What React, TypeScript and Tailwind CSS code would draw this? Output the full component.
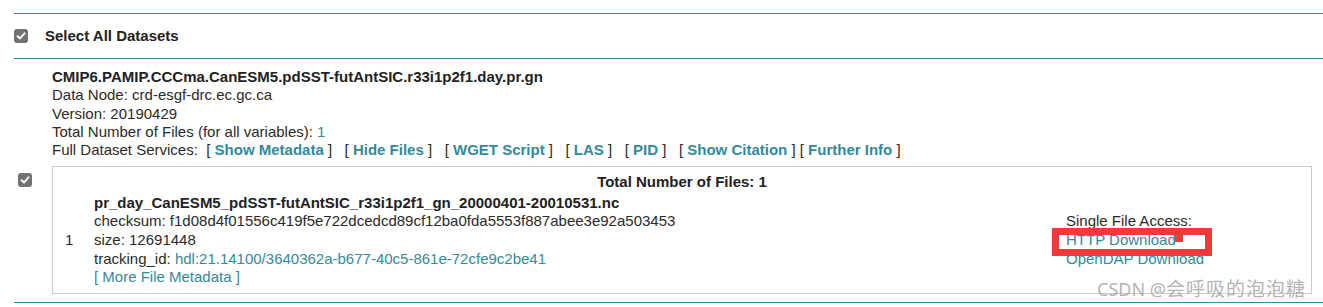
import React from "react";

function Check() {
  return (
    <div className="w-[14px] h-[14px] rounded-[3px] bg-[#727272] flex items-center justify-center shrink-0">
      <svg width="10" height="10" viewBox="0 0 10 10">
        <path d="M1.6 5.2 L4 7.5 L8.5 2.3" fill="none" stroke="#fff" strokeWidth="1.9" strokeLinecap="round" strokeLinejoin="round" />
      </svg>
    </div>
  );
}

const L = "text-[#338a9a]";

export default function App() {
  return (
    <div className="relative w-[1323px] h-[307px] overflow-hidden bg-white font-['Liberation_Sans',Arial,sans-serif] text-[15px] text-[#2a2a2a]">
      <div className="pl-[14px] pt-[13px]">
        <div className="border-t border-[#3a8b8c]">
          <div className="h-[44px] flex items-center gap-[17px]">
            <Check />
            <span className="font-bold text-[#222] pt-[1px]">Select All Datasets</span>
          </div>
        </div>
        <div className="border-t border-[#3a8b8c]">
          <div className="pl-[38px] pt-[9px] leading-[18.3px]">
            <div className="font-bold text-[#222]">CMIP6.PAMIP.CCCma.CanESM5.pdSST-futAntSIC.r33i1p2f1.day.pr.gn</div>
            <div>Data Node: crd-esgf-drc.ec.gc.ca</div>
            <div>Version: 20190429</div>
            <div>
              Total Number of Files (for all variables): <span className={L}>1</span>
            </div>
            <div className="whitespace-pre">
              {"Full Dataset Services:  [ "}
              <span className={`font-bold ${L}`}>Show Metadata</span>
              {" ]   [ "}
              <span className={`font-bold ${L}`}>Hide Files</span>
              {" ]   [ "}
              <span className={`font-bold ${L}`}>WGET Script</span>
              {" ]   [ "}
              <span className={`font-bold ${L}`}>LAS</span>
              {" ]   [ "}
              <span className={`font-bold ${L}`}>PID</span>
              {" ]   [ "}
              <span className={`font-bold ${L}`}>Show Citation</span>
              {" ] [ "}
              <span className={`font-bold ${L}`}>Further Info</span>
              {" ]"}
            </div>
          </div>
          <div className="flex mt-[7px] pb-[8px]">
            <div className="w-[38px] pl-[4px] pt-[7px]">
              <Check />
            </div>
            <div className="w-[1260px] border border-[#cccccc] pt-[6px] pb-[6px]">
              <div className="text-center font-bold text-[#222] leading-[18.7px] mb-[1.5px]">Total Number of Files: 1</div>
              <div className="flex items-center leading-[18.65px]">
                <div className="w-[41px] pl-[12px]">1</div>
                <div className="flex-1">
                  <div className="font-bold text-[#222]">pr_day_CanESM5_pdSST-futAntSIC_r33i1p2f1_gn_20000401-20010531.nc</div>
                  <div>checksum: f1d08d4f01556c419f5e722dcedcd89cf12ba0fda5553f887abee3e92a503453</div>
                  <div>size: 12691448</div>
                  <div>
                    tracking_id: <span className={L}>hdl:21.14100/3640362a-b677-40c5-861e-72cfe9c2be41</span>
                  </div>
                  <div className={L}>[ More File Metadata ]</div>
                </div>
                <div className="w-[245px]">
                  <div>Single File Access:</div>
                  <div className={L}>HTTP Download</div>
                  <div className={L}>OpenDAP Download</div>
                </div>
              </div>
            </div>
          </div>
        </div>
        <div className="border-t border-[#3a8b8c]" />
      </div>

      <div className="absolute left-[1052px] top-[228px] w-[160px] h-[28px] border-[7px] border-[#f23a3a]" />
      <div className="absolute left-[1175px] top-[234px] w-[8px] h-[8px] bg-[#f23a3a]" />

      <div className="absolute left-[1097px] top-[277px] whitespace-nowrap text-[18px] leading-[22px] text-[#a0a0a0]/80 font-['Noto_Sans','Noto_Sans_CJK_SC',sans-serif]">
        CSDN @<span className="text-[19px] tracking-[1px] font-['Noto_Sans_CJK_SC',sans-serif]">会呼吸的泡泡糖</span>
      </div>
    </div>
  );
}
